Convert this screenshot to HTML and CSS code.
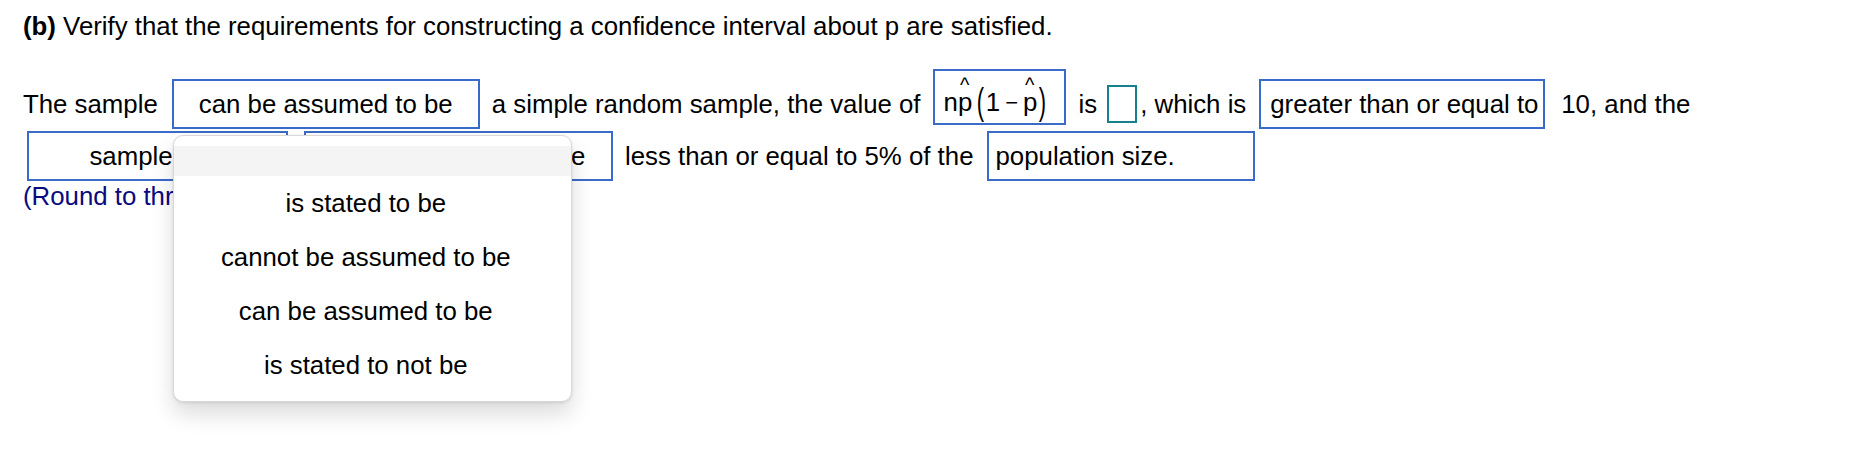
FILE: index.html
```html
<html>
<head>
<meta charset="UTF-8">
<title>Confidence interval requirements</title>
<link rel="stylesheet" href="styles.css">
</head>
<body>
<div class="page">

<p class="question"><b>(b)</b> Verify that the requirements for constructing a confidence interval about p are satisfied.</p>

<div class="row first">
  <span class="txt">The sample</span>
  <span class="pickWrap">
    <span class="box pick">can be assumed to be</span>
    <div class="menu">
      <div class="opt blank"></div>
      <div class="opt">is stated to be</div>
      <div class="opt">cannot be assumed to be</div>
      <div class="opt">can be assumed to be</div>
      <div class="opt">is stated to not be</div>
    </div>
  </span>
  <span class="txt gap12">a simple random sample, the value of</span>
  <span class="box formula">
    <span>n</span><span class="hat">p</span><span class="paren open">(</span><span>1</span><span class="minus">&minus;</span><span class="hat">p</span><span class="paren">)</span>
  </span>
  <span class="txt gap13">is</span>
  <span class="answer"></span>
  <span class="txt gap3">, which is</span>
  <span class="box choice greater">greater than or equal to</span>
  <span class="txt gap16">10, and the</span>
</div>

<div class="row">
  <span class="box pick sampleSize">sample size</span>
  <span class="box pick second">can be assumed to be</span>
  <span class="txt gap12">less than or equal to 5% of the</span>
  <span class="box choice population">population size.</span>
</div>

<p class="note">(Round to three decimal places as needed.)</p>

</div>
</body>
</html>
```

FILE: styles.css
```css
body  { margin: 0; background: #ffffff; color: #000000;
        font-family: "Liberation Sans", Arial, Helvetica, sans-serif; font-size: 25.8px; }

.page { padding: 11px 23px 0 23px; }

p.question { margin: 0; line-height: 30px; }

.row        { display: flex; align-items: center; height: 52px; white-space: nowrap; }
.row.first  { margin-top: 37px; }
.txt        { line-height: 29px; }
.gap3       { margin-left: 3px; }
.gap12      { margin-left: 12px; }
.gap13      { margin-left: 13px; }
.gap16      { margin-left: 16px; }

.box        { box-sizing: border-box; display: flex; align-items: center; height: 50px;
              border: 2px solid #3a6bc8; line-height: 29px; }
.pick       { justify-content: center; width: 308px; }
.pickWrap   { position: relative; display: flex; margin-left: 14px; }
.sampleSize { width: 261px; margin-left: 4px; }
.second     { width: 309px; margin-left: 16px; }
.choice     { padding-left: 9px; }
.greater    { width: 286px; margin-left: 13px; }
.population { width: 268px; margin-left: 13px; padding-left: 7px; }

.formula    { width: 133px; height: 56px; margin-left: 12px; margin-bottom: 14px;
              align-items: flex-end; padding: 0 0 6px 9px; }
.hat        { position: relative; }
.hat::after { content: "^"; position: absolute; left: 2px; top: -17px; font-size: 20px; }
.paren      { display: inline-block; transform: scale(0.85, 1.4); margin: 0 1px; font-weight: 300; }
.paren.open { margin-left: 4px; }
.minus      { margin: 0 5px; font-size: 22px; }

.answer     { box-sizing: border-box; width: 30px; height: 38px; margin-left: 10px;
              border: 2px solid #17808f; }

p.note      { margin: -1px 0 0 0; line-height: 30px; color: #0a0a80; }

.menu       { position: absolute; left: 1px; top: 56px; z-index: 5; width: 399px; box-sizing: border-box;
              background: #ffffff; border: 1px solid #d8d8d8; border-radius: 10px;
              box-shadow: 0 12px 22px rgba(0,0,0,0.14), 0 1px 3px rgba(0,0,0,0.10);
              padding: 10px 0 9px 0; }
.opt        { height: 54px; line-height: 54px; text-align: center; padding-right: 13px; }
.opt.blank  { height: 30px; background: #f4f4f4; }
```
